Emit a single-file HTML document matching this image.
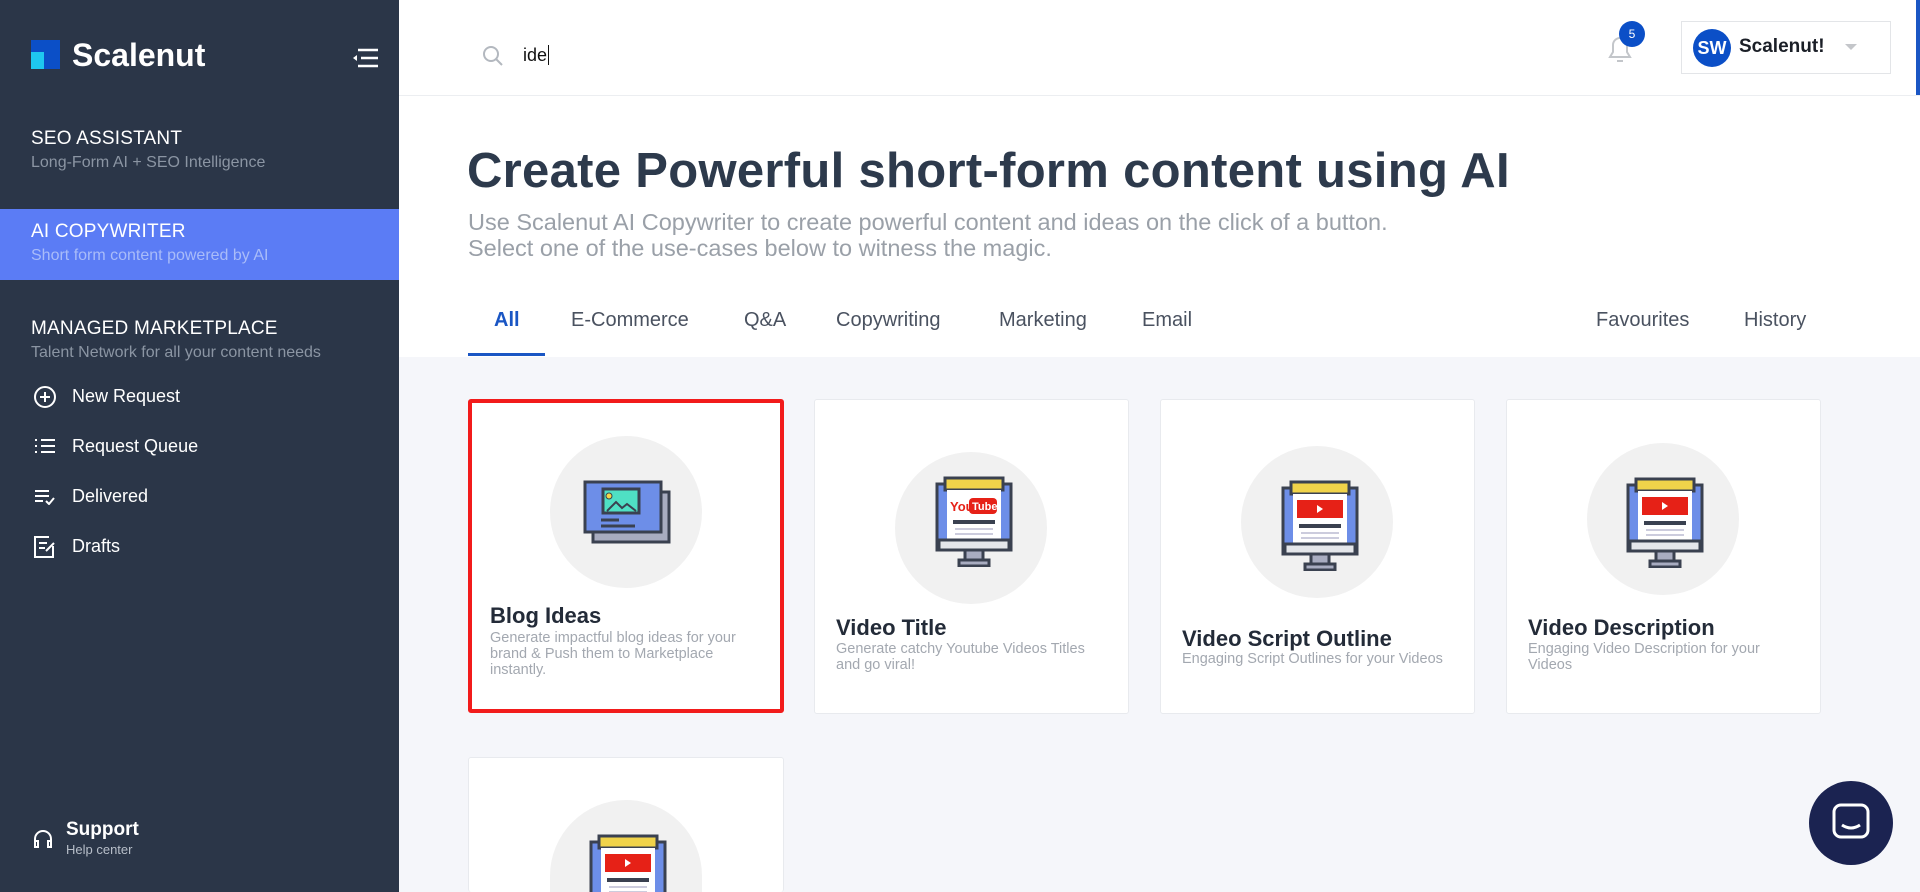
<!DOCTYPE html>
<html style="width:1920px;height:892px;overflow:hidden"><head><meta charset="utf-8"><style>
*{margin:0;padding:0;box-sizing:border-box}
body{width:1920px;height:892px;overflow:hidden;font-family:"Liberation Sans",sans-serif;background:#f5f6fa;position:relative}
.a{position:absolute;white-space:nowrap}
#sb{position:absolute;left:0;top:0;width:399px;height:892px;background:#2b3648;color:#fff}
.h{font-size:19px;color:#fff;letter-spacing:.2px}
.s{font-size:16px;color:#8b95a3}
.nav{font-size:18px;color:#fff}
.card{position:absolute;background:#fff;border:1px solid #e8eaee;border-radius:3px}
.circ{position:absolute;width:152px;height:152px;border-radius:50%;background:#f1f1f1}
.ct{position:absolute;font-size:22px;color:#232b38;font-weight:bold;white-space:nowrap}
.cd{position:absolute;font-size:14.5px;color:#a3a8b0;line-height:16px}
.tab{position:absolute;top:309px;font-size:20px;color:#4a5260}
</style></head><body>
<div id="sb">
 <div class="a" style="left:31px;top:40px;width:29px;height:29px;background:#0b4fc7"></div>
 <div class="a" style="left:31px;top:52px;width:13px;height:17px;background:#1ec8f0"></div>
 <div class="a" style="left:72px;top:37px;font-size:32px;font-weight:bold;color:#fff">Scalenut</div>
 <svg class="a" style="left:352px;top:48px" width="27" height="20" viewBox="0 0 27 20"><g stroke="#fff" stroke-width="2.4" fill="none"><path d="M6 2h20M9 10h17M6 18h20"/></g><path d="M1 10l4-3v6z" fill="#fff"/></svg>
 <div class="a h" style="left:31px;top:128px">SEO ASSISTANT</div>
 <div class="a s" style="left:31px;top:154px">Long-Form AI + SEO Intelligence</div>
 <div class="a" style="left:0;top:209px;width:399px;height:71px;background:#5b7cf5"></div>
 <div class="a h" style="left:31px;top:221px">AI COPYWRITER</div>
 <div class="a s" style="left:31px;top:247px;color:#a9bcf9">Short form content powered by AI</div>
 <div class="a h" style="left:31px;top:318px">MANAGED MARKETPLACE</div>
 <div class="a s" style="left:31px;top:344px">Talent Network for all your content needs</div>
 <svg class="a" style="left:33px;top:385px" width="24" height="24" viewBox="0 0 24 24" fill="none" stroke="#fff" stroke-width="2"><circle cx="12" cy="12" r="10"/><path d="M12 7v10M7 12h10"/></svg>
 <div class="a nav" style="left:72px;top:386px">New Request</div>
 <svg class="a" style="left:35px;top:438px" width="20" height="16" viewBox="0 0 20 16" stroke="#fff" stroke-width="2"><path d="M0 2h2M6 2h14M0 8h2M6 8h14M0 14h2M6 14h14"/></svg>
 <div class="a nav" style="left:72px;top:436px">Request Queue</div>
 <svg class="a" style="left:35px;top:489px" width="20" height="16" viewBox="0 0 20 16" stroke="#fff" stroke-width="2" fill="none"><path d="M0 2h14M0 7h14M0 12h8M11 12l3 3 5-6"/></svg>
 <div class="a nav" style="left:72px;top:486px">Delivered</div>
 <svg class="a" style="left:34px;top:536px" width="22" height="22" viewBox="0 0 22 22" stroke="#fff" stroke-width="2" fill="none"><path d="M19 10v11H1V1h14M5 7h8M5 12h6M12 15l8-8"/></svg>
 <div class="a nav" style="left:72px;top:536px">Drafts</div>
 <svg class="a" style="left:32px;top:829px" width="22" height="20" viewBox="0 0 22 20" stroke="#fff" stroke-width="2" fill="none"><path d="M3 13V10a8 8 0 0116 0v3M3 12h3v6H3zM16 12h3v6h-3z"/></svg>
 <div class="a" style="left:66px;top:819px;font-size:19px;font-weight:bold">Support</div>
 <div class="a" style="left:66px;top:842px;font-size:13px;color:#b7bec8">Help center</div>
</div>
<div class="a" style="left:399px;top:0;width:1521px;height:357px;background:#fff"></div>
<div class="a" style="left:399px;top:95px;width:1521px;height:1px;background:#eceef1"></div>
<div class="a" style="left:1916px;top:0;width:4px;height:95px;background:#1a56c4"></div>
<svg class="a" style="left:482px;top:45px" width="22" height="22" viewBox="0 0 22 22" fill="none" stroke="#b3b8bf" stroke-width="2"><circle cx="9" cy="9" r="7"/><path d="M14 14l6 6"/></svg>
<div class="a" style="left:523px;top:45px;font-size:18px;color:#111">ide<span style="border-left:1px solid #111;margin-left:1px"></span></div>
<svg class="a" style="left:1606px;top:33px" width="28" height="32" viewBox="0 0 28 32" fill="none" stroke="#c3c6ca" stroke-width="2"><path d="M4 24h20l-3-5V12a7 7 0 00-14 0v7z"/><path d="M11 28h6"/></svg>
<div class="a" style="left:1619px;top:21px;width:26px;height:26px;border-radius:50%;background:#0b4fc7;color:#fff;font-size:12px;text-align:center;line-height:26px">5</div>
<div class="a" style="left:1681px;top:21px;width:210px;height:53px;border:1px solid #e3e5e8;background:#fff"></div>
<div class="a" style="left:1693px;top:29px;width:38px;height:38px;border-radius:50%;background:#0b4fc7;color:#fff;font-weight:bold;font-size:18px;text-align:center;line-height:38px">SW</div>
<div class="a" style="left:1739px;top:36px;font-size:19px;font-weight:bold;color:#1b1f27">Scalenut!</div>
<div class="a" style="left:1845px;top:44px;border-left:6px solid transparent;border-right:6px solid transparent;border-top:6px solid #c4c6ca"></div>
<div class="a" style="left:467px;top:143px;font-size:49px;font-weight:bold;color:#2d3a4c;letter-spacing:.3px">Create Powerful short-form content using AI</div>
<div class="a" style="left:468px;top:209px;font-size:23.5px;color:#9aa0a8;line-height:26px">Use Scalenut AI Copywriter to create powerful content and ideas on the click of a button.<br>Select one of the use-cases below to witness the magic.</div>
<div class="tab" style="left:494px;color:#1a56c4;font-weight:bold">All</div>
<div class="a" style="left:468px;top:353px;width:77px;height:3px;background:#1a56c4"></div>
<div class="tab" style="left:571px">E-Commerce</div>
<div class="tab" style="left:744px">Q&amp;A</div>
<div class="tab" style="left:836px">Copywriting</div>
<div class="tab" style="left:999px">Marketing</div>
<div class="tab" style="left:1142px">Email</div>
<div class="tab" style="left:1596px">Favourites</div>
<div class="tab" style="left:1744px">History</div>

<div class="card" style="left:468px;top:399px;width:316px;height:314px;border:4px solid #f21b1b"></div>
<div class="circ" style="left:550px;top:436px"></div>
<svg class="a" style="left:583px;top:480px" width="88" height="64" viewBox="0 0 88 64"><rect x="10" y="12" width="76" height="50" fill="#a8acc0" stroke="#3a4150" stroke-width="3"/><rect x="2" y="2" width="76" height="50" fill="#6d8ee8" stroke="#3a4150" stroke-width="3"/><rect x="20" y="9" width="36" height="24" fill="#4fe0c4" stroke="#3a4150" stroke-width="3"/><path d="M24 31l9-9 6 6 5-4 9 7" stroke="#3a4150" stroke-width="2" fill="none"/><circle cx="26" cy="16" r="3" fill="#f5d94a" stroke="#3a4150"/><path d="M18 40h18M18 46h34" stroke="#3a4150" stroke-width="3"/></svg>
<div class="ct" style="left:490px;top:603px">Blog Ideas</div>
<div class="cd" style="left:490px;top:630px;width:270px">Generate impactful blog ideas for your brand &amp; Push them to Marketplace instantly.</div>

<div class="card" style="left:814px;top:399px;width:315px;height:315px"></div>
<div class="circ" style="left:895px;top:452px"></div>
<div class="ct" style="left:836px;top:615px">Video Title</div>
<div class="cd" style="left:836px;top:641px;width:270px">Generate catchy Youtube Videos Titles and go viral!</div>

<div class="card" style="left:1160px;top:399px;width:315px;height:315px"></div>
<div class="circ" style="left:1241px;top:446px"></div>
<div class="ct" style="left:1182px;top:626px">Video Script Outline</div>
<div class="cd" style="left:1182px;top:651px;width:270px">Engaging Script Outlines for your Videos</div>

<div class="card" style="left:1506px;top:399px;width:315px;height:315px"></div>
<div class="circ" style="left:1587px;top:443px"></div>
<div class="ct" style="left:1528px;top:615px">Video Description</div>
<div class="cd" style="left:1528px;top:641px;width:270px">Engaging Video Description for your Videos</div>

<div class="card" style="left:468px;top:757px;width:316px;height:135px;border-bottom:none"></div>
<div class="circ" style="left:550px;top:800px;height:92px;border-radius:76px 76px 0 0"></div>

<svg width="0" height="0" style="position:absolute"><defs><g id="mon"><rect x="0" y="6" width="74" height="66" fill="#6d8ee8" stroke="#3a4150" stroke-width="3"/><rect x="8" y="0" width="58" height="12" fill="#f0d34a" stroke="#3a4150" stroke-width="3"/><rect x="10" y="12" width="54" height="54" fill="#fff"/><rect x="2" y="62" width="70" height="10" fill="#e4e6ea" stroke="#3a4150" stroke-width="3"/><rect x="28" y="72" width="18" height="10" fill="#a8acc0" stroke="#3a4150" stroke-width="3"/><rect x="22" y="82" width="30" height="6" fill="#a8acc0" stroke="#3a4150" stroke-width="3"/><path d="M16 44h42" stroke="#3a4150" stroke-width="4"/><path d="M18 51h38M18 56h38" stroke="#ccd" stroke-width="2"/></g></defs></svg>
<svg class="a" style="left:934px;top:475px" width="80" height="92" viewBox="-3 -3 80 92"><use href="#mon"/><rect x="32" y="20" width="28" height="16" rx="4" fill="#e62117"/><text x="13" y="33" font-size="13" font-weight="bold" fill="#e62117" font-family="Liberation Sans">You</text><text x="35" y="32" font-size="11" font-weight="bold" fill="#fff" font-family="Liberation Sans">Tube</text></svg>
<svg class="a" style="left:1280px;top:479px" width="80" height="92" viewBox="-3 -3 80 92"><use href="#mon"/><rect x="14" y="18" width="46" height="18" fill="#e62117"/><path d="M34 23l6 4-6 4z" fill="#fff"/></svg>
<svg class="a" style="left:1625px;top:476px" width="80" height="92" viewBox="-3 -3 80 92"><use href="#mon"/><rect x="14" y="18" width="46" height="18" fill="#e62117"/><path d="M34 23l6 4-6 4z" fill="#fff"/></svg>
<svg class="a" style="left:588px;top:833px" width="80" height="59" viewBox="-3 -3 80 59"><use href="#mon"/><rect x="14" y="18" width="46" height="18" fill="#e62117"/><path d="M34 23l6 4-6 4z" fill="#fff"/></svg>

<div class="a" style="left:1809px;top:781px;width:84px;height:84px;border-radius:50%;background:#1b2351"></div>
<svg class="a" style="left:1832px;top:803px" width="38" height="40" viewBox="0 0 38 40" fill="none" stroke="#fff" stroke-width="3"><rect x="2" y="2" width="34" height="32" rx="7"/><path d="M10 22q9 6 18 0"/></svg>
</body></html>
